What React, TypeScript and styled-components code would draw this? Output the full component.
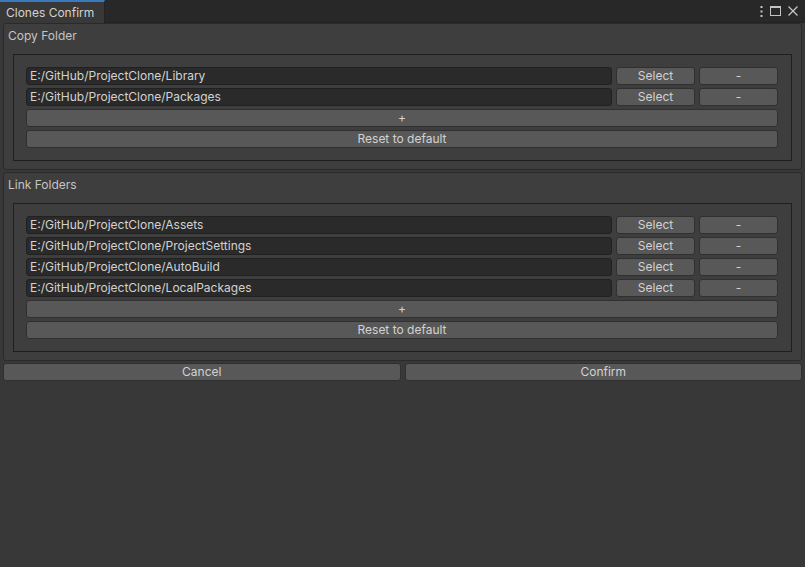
import styled, { createGlobalStyle } from "styled-components";

const GlobalStyle = createGlobalStyle`
  html, body {
    margin: 0;
    padding: 0;
    background: #383838;
  }
  body {
    font-family: Inter, "Noto Sans", "Liberation Sans", sans-serif;
    font-size: 12px;
    color: #c4c4c4;
  }
`;

const Window = styled.div`
  width: 805px;
  height: 567px;
  display: flex;
  flex-direction: column;
  background: #383838;
  overflow: hidden;
`;

const TabBar = styled.div`
  height: 22px;
  display: flex;
  align-items: stretch;
  background: #282828;
  border-bottom: 1px solid #232323;
`;

const Tab = styled.div`
  width: 105px;
  box-sizing: border-box;
  padding: 3px 0 0 6px;
  background: #383838;
  border-top: 2px solid #3a79bb;
  border-right: 1px solid #232323;
  margin-bottom: -1px;
  color: #d2d2d2;
  font-size: 12px;
  line-height: 15px;
`;

const TabSpacer = styled.div`
  flex: 1;
`;

const TabActions = styled.div`
  display: flex;
  align-items: center;
  gap: 7px;
  padding: 0 7px 0 0;
  color: #c4c4c4;
`;

const Body = styled.div`
  display: flex;
  flex-direction: column;
  gap: 2px;
  padding: 0 3px;
`;

const Section = styled.div`
  background: #3e3e3e;
  border: 1px solid #2a2a2a;
  border-radius: 3px;
  padding: 0 0 8px 0;
`;

const SectionTitle = styled.div`
  height: 21px;
  line-height: 22px;
  padding: 1px 0 0 4px;
  color: #c4c4c4;
  margin-bottom: 8px;
`;

const ListBox = styled.div`
  margin: 0 9px;
  border: 1px solid #1f1f1f;
  padding: 12px 13px 12px 12px;
  display: flex;
  flex-direction: column;
  gap: 3px;
`;

const Row = styled.div`
  display: flex;
  gap: 4px;
`;

const PathField = styled.div`
  flex: 1;
  height: 18px;
  box-sizing: border-box;
  background: #2a2a2a;
  border: 1px solid #212121;
  border-radius: 3px;
  padding: 0 3px;
  line-height: 16px;
  color: #d2d2d2;
  white-space: nowrap;
  overflow: hidden;
`;

const Button = styled.button<{ $width?: number }>`
  height: 18px;
  box-sizing: border-box;
  width: ${(p) => (p.$width ? `${p.$width}px` : "auto")};
  flex: ${(p) => (p.$width ? "none" : "1 1 0")};
  min-width: 0;
  background: #585858;
  border: 1px solid #303030;
  border-radius: 3px;
  color: #d2d2d2;
  font-family: inherit;
  font-size: 12px;
  line-height: 16px;
  padding: 0;
  margin: 0;
`;

const FullButton = styled(Button)`
  width: 100%;
`;

const Footer = styled.div`
  display: flex;
  gap: 4px;
`;

const copyFolders = ["E:/GitHub/ProjectClone/Library", "E:/GitHub/ProjectClone/Packages"];

const linkFolders = [
  "E:/GitHub/ProjectClone/Assets",
  "E:/GitHub/ProjectClone/ProjectSettings",
  "E:/GitHub/ProjectClone/AutoBuild",
  "E:/GitHub/ProjectClone/LocalPackages",
];

const MenuIcon = () => (
  <svg width="3" height="11" viewBox="0 0 3 11" fill="#c4c4c4">
    <rect x="0.5" y="0" width="2" height="2" />
    <rect x="0.5" y="4.5" width="2" height="2" />
    <rect x="0.5" y="9" width="2" height="2" />
  </svg>
);

const MaximizeIcon = () => (
  <svg width="11" height="10" viewBox="0 0 11 10" fill="none" stroke="#c4c4c4">
    <rect x="0.5" y="0.5" width="10" height="9" />
    <line x1="0.5" y1="1.5" x2="10.5" y2="1.5" />
  </svg>
);

const CloseIcon = () => (
  <svg width="10" height="10" viewBox="0 0 10 10" stroke="#c4c4c4" strokeWidth="1.3">
    <line x1="0.5" y1="0.5" x2="9.5" y2="9.5" />
    <line x1="9.5" y1="0.5" x2="0.5" y2="9.5" />
  </svg>
);

const FolderList = ({ title, folders }: { title: string; folders: string[] }) => (
  <Section>
    <SectionTitle>{title}</SectionTitle>
    <ListBox>
      {folders.map((f) => (
        <Row key={f}>
          <PathField>{f}</PathField>
          <Button $width={79}>Select</Button>
          <Button $width={79}>-</Button>
        </Row>
      ))}
      <FullButton>+</FullButton>
      <FullButton>Reset to default</FullButton>
    </ListBox>
  </Section>
);

const App = () => (
  <Window>
    <GlobalStyle />
    <TabBar>
      <Tab>Clones Confirm</Tab>
      <TabSpacer />
      <TabActions>
        <MenuIcon />
        <MaximizeIcon />
        <CloseIcon />
      </TabActions>
    </TabBar>
    <Body>
      <FolderList title="Copy Folder" folders={copyFolders} />
      <FolderList title="Link Folders" folders={linkFolders} />
      <Footer>
        <Button>Cancel</Button>
        <Button>Confirm</Button>
      </Footer>
    </Body>
  </Window>
);

export default App;
